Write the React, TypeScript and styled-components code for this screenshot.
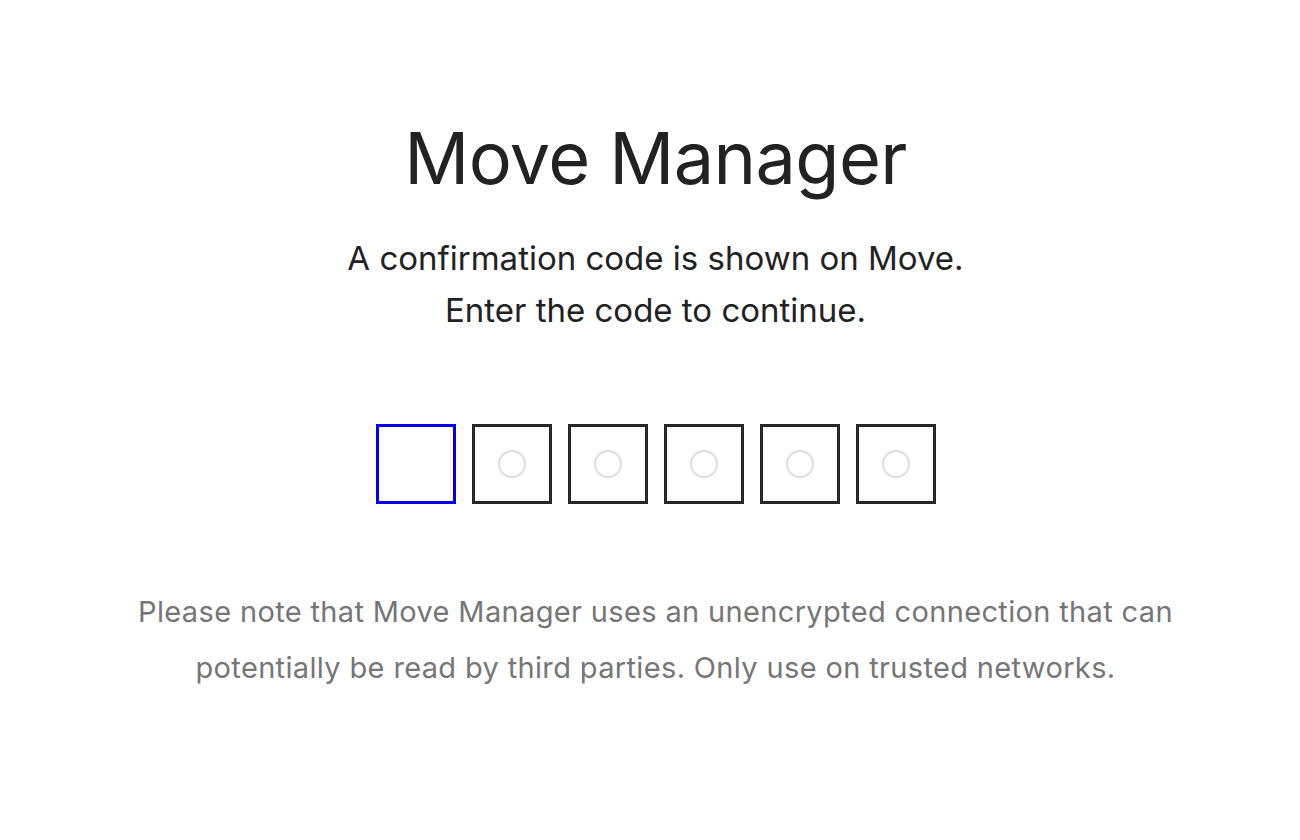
import React, { FC } from 'react';
import styled, { createGlobalStyle } from 'styled-components';

const GlobalStyle = createGlobalStyle`
	html, body {
		margin: 0;
		padding: 0;
		background: #fff;
	}
	body {
		font-family: Inter, "Noto Sans", sans-serif;
		color: #222;
	}
`;

const Page = styled.div`
	display: flex;
	flex-direction: column;
	align-items: center;
	padding: 112px 0 0 11px;
	width: 1300px;
	min-height: 840px;
	box-sizing: border-box;
`;

const Title = styled.h1`
	margin: 0;
	font-size: 72px;
	font-weight: 400;
	line-height: 92px;
	letter-spacing: -0.6px;
	color: #222;
`;

const Lead = styled.p`
	margin: 28px 0 0;
	font-size: 33px;
	line-height: 52px;
	text-align: center;
	color: #222;
`;

const CodeRow = styled.div`
	display: flex;
	gap: 16px;
	margin-top: 88px;
`;

const CodeBox = styled.div<{ $active?: boolean }>`
	display: flex;
	align-items: center;
	justify-content: center;
	width: 80px;
	height: 80px;
	box-sizing: border-box;
	border: 3px solid ${({ $active }) => ($active ? '#0000e6' : '#262626')};
`;

const Dot = styled.span`
	width: 24px;
	height: 24px;
	border-radius: 50%;
	border: 2px solid #dcdce2;
`;

const Note = styled.p`
	margin: 80px 0 0;
	font-size: 29px;
	line-height: 56px;
	letter-spacing: 0.35px;
	text-align: center;
	color: #767676;
`;

const App: FC = () => (
	<>
		<GlobalStyle />
		<Page>
			<Title>Move Manager</Title>
			<Lead>
				A confirmation code is shown on Move.
				<br />
				Enter the code to continue.
			</Lead>
			<CodeRow>
				{[0, 1, 2, 3, 4, 5].map((i) => (
					<CodeBox key={i} $active={i === 0}>
						{i > 0 && <Dot />}
					</CodeBox>
				))}
			</CodeRow>
			<Note>
				Please note that Move Manager uses an unencrypted connection that can
				<br />
				potentially be read by third parties. Only use on trusted networks.
			</Note>
		</Page>
	</>
);

export default App;
